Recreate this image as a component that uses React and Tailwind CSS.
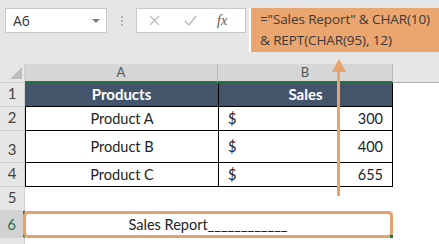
import React from 'react';

const rowHead = "flex items-end justify-center pb-[2px] text-[15px] text-[#444] bg-[#e6e6e6] border-r border-b border-[#cfcfcf]";

const App = () => {
  return (
    <div className="relative w-[439px] h-[244px] overflow-hidden bg-[#e6e6e6] font-['Open_Sans',sans-serif]">
      {/* formula bar */}
      <div className="flex items-start h-[52px] pt-[8px]">
        <div className="ml-[5px] w-[102px] h-[25px] bg-white border border-[#c8c8c8] flex items-center justify-between pl-[7px] pr-[6px] text-[14px] text-[#333]">
          <span>A6</span>
          <span className="w-0 h-0 border-l-[4px] border-r-[4px] border-t-[4px] border-l-transparent border-r-transparent border-t-[#7a7a7a]"></span>
        </div>
        <div className="ml-[14px] mt-[8px] flex flex-col gap-[2px]">
          <span className="w-[2px] h-[2px] bg-[#b0b0b0]"></span>
          <span className="w-[2px] h-[2px] bg-[#b0b0b0]"></span>
          <span className="w-[2px] h-[2px] bg-[#b0b0b0]"></span>
        </div>
        <div className="ml-[13px] w-[110px] h-[25px] bg-white border border-[#c8c8c8] flex items-center">
          <svg className="ml-[12px]" width="11" height="11" viewBox="0 0 11 11">
            <path d="M1 1 L10 10 M10 1 L1 10" stroke="#bdbdbd" strokeWidth="1.3" />
          </svg>
          <svg className="ml-[24px]" width="13" height="11" viewBox="0 0 13 11">
            <path d="M1 6 L5 10 L12 1" stroke="#bdbdbd" strokeWidth="1.5" fill="none" />
          </svg>
          <span className="ml-[20px] text-[14px] italic text-[#555] font-['Liberation_Serif',serif]">fx</span>
        </div>
        <div className="ml-[3px] flex-1 h-[44px] border-l-[2px] border-white bg-[#eba56e] pl-[9px] pt-[1px] text-[13.5px] leading-[21px] text-[#3a3a3a] tracking-[-0.1px]">
          <div>="Sales Report" &amp; CHAR(10)</div>
          <div>&amp; REPT(CHAR(95), 12)</div>
        </div>
      </div>

      {/* sheet */}
      <div className="mt-[12px] grid grid-cols-[25px_193px_175px_1fr] grid-rows-[19px_24px_24px_32px_24px_24px_27px_1fr] h-[180px] text-[14px] text-[#222] font-['Lato',sans-serif]">
        {/* header row */}
        <div className="relative bg-[#e6e6e6] border-r border-b border-[#cfcfcf]">
          <svg className="absolute right-[2px] bottom-[3px]" width="12" height="12" viewBox="0 0 12 12">
            <path d="M12 0 L12 12 L0 12 Z" fill="#bcbcbc" />
          </svg>
        </div>
        <div className="flex items-center justify-center bg-[#d6d6d6] border-r border-[#b8b8b8] border-b-[2px] border-b-[#217346] text-[13px] text-[#555]">A</div>
        <div className="flex items-center justify-center bg-[#d6d6d6] border-r border-[#b8b8b8] border-b-[2px] border-b-[#217346] text-[13px] text-[#555]">B</div>
        <div className="bg-[#e6e6e6] border-b border-[#b0b0b0]"></div>

        {/* row 1 */}
        <div className={rowHead}>1</div>
        <div className="flex items-center justify-center bg-[#44546a] text-white font-bold text-[15px] border-b border-black">Products</div>
        <div className="flex items-center justify-center bg-[#44546a] text-white font-bold text-[15px] border-l border-r border-b border-black">Sales</div>
        <div className="bg-white"></div>

        {/* data rows */}
        {[['2', 'Product A', '300'], ['3', 'Product B', '400'], ['4', 'Product C', '655']].map(([n, p, v]) => (
          <React.Fragment key={n}>
            <div className={rowHead}>{n}</div>
            <div className="flex items-center justify-center bg-white border-l border-b border-black text-[14.5px]">{p}</div>
            <div className="flex items-center justify-between bg-white border-l border-r border-b border-black px-[9px] text-[14.5px]">
              <span>$</span>
              <span>{v}</span>
            </div>
            <div className="bg-white"></div>
          </React.Fragment>
        ))}

        {/* row 5 */}
        <div className={rowHead}>5</div>
        <div className="col-span-2 bg-white"></div>
        <div className="bg-white"></div>

        {/* row 6 */}
        <div className="flex items-end justify-center pb-[2px] text-[15px] text-[#217346] bg-[#d2d2d2] border-r-[2px] border-r-[#217346] border-b border-[#cfcfcf]">6</div>
        <div className="relative col-span-2 -ml-[2px] bg-white border-[3px] border-[#e3a26d] rounded-[5px] flex items-center justify-center text-[14.5px]">
          Sales Report____________
          <span className="absolute -right-[3px] -bottom-[3px] w-[3px] h-[3px] bg-[#217346]"></span>
        </div>
        <div className="bg-white"></div>

        {/* row 7 */}
        <div className="bg-[#e6e6e6] border-r border-[#cfcfcf]"></div>
        <div className="col-span-3 bg-white"></div>
      </div>

      {/* arrow */}
      <div className="absolute left-[337px] top-[68px] w-[3px] h-[128px] bg-[#e9a46c]"></div>
      <svg className="absolute left-[331px] top-[59px]" width="16" height="13" viewBox="0 0 16 13">
        <path d="M8 0 L15 13 L1 13 Z" fill="#e9a46c" />
      </svg>
    </div>
  );
};

export default App;
